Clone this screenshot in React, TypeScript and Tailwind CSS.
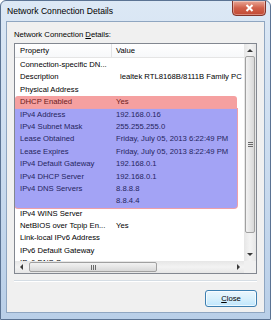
import React from "react"

const font = { fontFamily: '"Liberation Sans", Arial, sans-serif' }

type Row = { prop: string; value?: string; shift?: boolean }

const top: Row[] = [
  { prop: "Connection-specific DN..." },
  { prop: "Description", value: "lealtek RTL8168B/8111B Family PC", shift: true },
  { prop: "Physical Address" },
]

const red: Row[] = [{ prop: "DHCP Enabled", value: "Yes" }]

const blue: Row[] = [
  { prop: "IPv4 Address", value: "192.168.0.16" },
  { prop: "IPv4 Subnet Mask", value: "255.255.255.0" },
  { prop: "Lease Obtained", value: "Friday, July 05, 2013 6:22:49 PM" },
  { prop: "Lease Expires", value: "Friday, July 05, 2013 8:22:49 PM" },
  { prop: "IPv4 Default Gateway", value: "192.168.0.1" },
  { prop: "IPv4 DHCP Server", value: "192.168.0.1" },
  { prop: "IPv4 DNS Servers", value: "8.8.8.8" },
  { prop: "", value: "8.8.4.4" },
]

const bottom: Row[] = [
  { prop: "IPv4 WINS Server" },
  { prop: "NetBIOS over Tcpip En...", value: "Yes" },
  { prop: "Link-local IPv6 Address" },
  { prop: "IPv6 Default Gateway" },
  { prop: "IPv6 DNS Server" },
]

function ListRow({ row }: { row: Row }) {
  return (
    <div className="flex h-[12.4px] leading-[12.4px] whitespace-nowrap">
      <div className="w-[97px] shrink-0 overflow-hidden pl-[5px]">{row.prop}</div>
      <div className={row.shift ? "pl-[8px]" : "pl-[4px]"}>{row.value}</div>
    </div>
  )
}

function Arrow({ dir }: { dir: "up" | "down" | "left" | "right" }) {
  const pts = {
    up: "1,4 4,1 7,4",
    down: "1,1 4,4 7,1",
    left: "4,1 1,4 4,7",
    right: "1,1 4,4 1,7",
  }[dir]
  const horiz = dir === "left" || dir === "right"
  return (
    <svg width={horiz ? 5 : 8} height={horiz ? 8 : 5} viewBox={horiz ? "0 0 5 8" : "0 0 8 5"}>
      <polygon points={pts} fill="#3a3a3a" />
    </svg>
  )
}

export default function App() {
  return (
    <div
      className="w-[271px] h-[320px] overflow-hidden rounded-t-[6px] border border-[#5b7393] bg-gradient-to-b from-[#dce8f5] via-[#cbdcef] to-[#b9cfe8] text-black"
      style={font}
    >
      {/* title bar */}
      <div className="relative h-[20px] flex items-center pl-[6px] text-[8.6px]">
        Network Connection Details
        <div className="absolute right-[4px] top-[-1px] w-[34px] h-[16px] rounded-b-[4px] border border-[#83352a] bg-gradient-to-b from-[#e8a696] via-[#d0604a] to-[#c24a34] flex items-center justify-center shadow-[inset_0_0_0_1px_rgba(255,255,255,0.35)]">
          <svg width="9" height="8" viewBox="0 0 9 8">
            <path d="M1.5 1 L7.5 7 M7.5 1 L1.5 7" stroke="#fff" strokeWidth="2" />
          </svg>
        </div>
      </div>

      {/* client area */}
      <div className="mx-[5px] h-[292px] border border-[#8fa6c1] bg-[#f0f0f0] text-[7.7px] flex flex-col">
        <div className="h-[21px] pl-[7px] pt-[8px] leading-[10px]">
          Network Connection <span className="underline">D</span>etails:
        </div>

        {/* list view */}
        <div className="ml-[7px] w-[243px] h-[231px] border border-[#828790] bg-white flex flex-col">
          <div className="flex h-[217px]">
            <div className="w-[229px] flex flex-col">
              <div className="h-[14px] shrink-0 flex border-b border-[#e5e5e5] bg-gradient-to-b from-white to-[#f7f8fa] leading-[14px]">
                <div className="w-[97px] pl-[5px] border-r border-[#e2e3e5]">Property</div>
                <div className="pl-[4px]">Value</div>
              </div>
              <div className="flex-1 overflow-hidden pt-[1px]">
                {top.map((r, i) => (
                  <ListRow key={i} row={r} />
                ))}
                <div className="w-[222px] rounded-t-[3px] bg-[#f5a0a0] text-[#6a1c1c]">
                  {red.map((r, i) => (
                    <ListRow key={i} row={r} />
                  ))}
                </div>
                <div className="w-[222px] rounded-b-[3px] bg-[#a3a3f5] text-[#25255e] shadow-[0_0_0_1px_#eea0a8]">
                  {blue.map((r, i) => (
                    <ListRow key={i} row={r} />
                  ))}
                </div>
                {bottom.map((r, i) => (
                  <ListRow key={i} row={r} />
                ))}
              </div>
            </div>

            {/* vertical scrollbar */}
            <div className="w-[12px] flex flex-col bg-gradient-to-r from-[#e6e6e6] via-[#f3f3f3] to-[#e6e6e6]">
              <div className="h-[12px] flex items-center justify-center">
                <Arrow dir="up" />
              </div>
              <div className="mx-[1px] h-[177px] rounded-[2px] border border-[#a0a0a0] bg-gradient-to-r from-[#f2f2f2] via-[#e6e6e6] to-[#d8d8d8] flex items-center justify-center">
                <svg width="5" height="5" viewBox="0 0 5 5">
                  <path d="M0 0.5 H5 M0 2.5 H5 M0 4.5 H5" stroke="#6a6a6a" strokeWidth="1" />
                </svg>
              </div>
              <div className="flex-1" />
              <div className="h-[14px] flex items-center justify-center">
                <Arrow dir="down" />
              </div>
            </div>
          </div>

          {/* horizontal scrollbar */}
          <div className="flex h-[12px]">
            <div className="w-[229px] flex items-center bg-gradient-to-b from-[#e6e6e6] via-[#f3f3f3] to-[#e6e6e6]">
              <div className="w-[12px] flex items-center justify-center">
                <Arrow dir="left" />
              </div>
              <div className="ml-[2px] w-[128px] h-[10px] rounded-[2px] border border-[#a0a0a0] bg-gradient-to-b from-[#f2f2f2] via-[#e6e6e6] to-[#d8d8d8] flex items-center justify-center">
                <svg width="5" height="5" viewBox="0 0 5 5">
                  <path d="M0.5 0 V5 M2.5 0 V5 M4.5 0 V5" stroke="#6a6a6a" strokeWidth="1" />
                </svg>
              </div>
              <div className="flex-1" />
              <div className="w-[12px] flex items-center justify-center">
                <Arrow dir="right" />
              </div>
            </div>
            <div className="flex-1 bg-[#f0f0f0]" />
          </div>
        </div>

        <div className="mt-[6px] mx-[7px] h-[2px] border-t border-[#d5dde4] border-b border-b-white" />

        <div className="flex justify-end pr-[7px] mt-[8px]">
          <div className="w-[52px] h-[17px] rounded-[3px] border border-[#3c7fb1] bg-gradient-to-b from-[#eaf6fd] via-[#d9f0fc] to-[#bee6fd] shadow-[inset_0_0_0_1px_rgba(255,255,255,0.7)] flex items-center justify-center">
            <span>
              <span className="underline">C</span>lose
            </span>
          </div>
        </div>
      </div>
    </div>
  )
}
